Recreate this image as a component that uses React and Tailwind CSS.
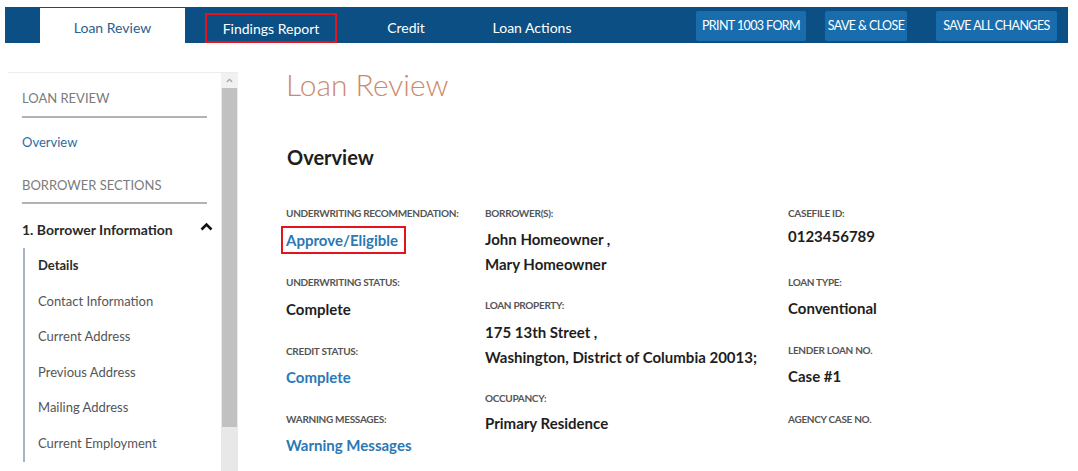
import React from "react";

const font = { fontFamily: "Lato, 'Open Sans', sans-serif" };

function Label({ children }) {
  return (
    <div className="text-[10px] leading-[14px] font-bold uppercase text-[#555555] tracking-[-0.3px]">
      {children}
    </div>
  );
}

function Value({ children, blue }) {
  return (
    <div
      className={
        "text-[15px] leading-[25px] font-bold " +
        (blue ? "text-[#2b78b4]" : "text-[#1e1e1e]")
      }
    >
      {children}
    </div>
  );
}

const subItems = [
  "Details",
  "Contact Information",
  "Current Address",
  "Previous Address",
  "Mailing Address",
  "Current Employment",
];

export default function App() {
  return (
    <div className="w-[1078px] h-[471px] bg-white overflow-hidden relative" style={font}>
      {/* Top nav */}
      <div className="mt-[7px] ml-[5px] w-[1063px] h-[36px] bg-[#0c4f84] flex items-stretch">
        <div className="w-[35px]" />
        <div className="w-[145px] mt-[1px] pt-[4px] bg-white flex items-center justify-center text-[14px] text-[#2d5e8c]">
          Loan Review
        </div>
        <div className="ml-[20px] w-[132px] mt-[6px] pt-[1px] border-2 border-[#e3141b] flex items-center justify-center text-[14px] text-white">
          Findings Report
        </div>
        <div className="w-[138px] pt-[5px] flex items-center justify-center text-[14px] text-white">
          Credit
        </div>
        <div className="w-[114px] pt-[5px] flex items-center justify-center text-[14px] text-white">
          Loan Actions
        </div>
        <div className="ml-auto flex items-center pt-[2px] pr-[11px]">
          <div className="w-[110px] h-[30px] bg-[#1a6dad] rounded-[2px] flex items-center justify-center text-white text-[12.5px] tracking-[-0.6px]">
            PRINT 1003 FORM
          </div>
          <div className="ml-[19px] w-[82px] h-[30px] bg-[#1a6dad] rounded-[2px] flex items-center justify-center text-white text-[12.5px] tracking-[-0.6px]">
            SAVE &amp; CLOSE
          </div>
          <div className="ml-[29px] w-[121px] h-[30px] bg-[#1a6dad] rounded-[2px] flex items-center justify-center text-white text-[12.5px] tracking-[-0.6px]">
            SAVE ALL CHANGES
          </div>
        </div>
      </div>

      <div className="flex">
        {/* Sidebar */}
        <div className="mt-[29px] ml-[8px] w-[230px] h-[400px] border-t border-[#ececec] flex">
          <div className="w-[213px] pl-[14px] pr-[14px]">
            <div className="mt-[16px] text-[13px] leading-[18px] text-[#7b7b7b]">LOAN REVIEW</div>
            <div className="mt-[9px] h-[2px] bg-[#b3b3b3]" />
            <div className="mt-[15px] text-[13px] leading-[18px] text-[#2f6aa0]">Overview</div>
            <div className="mt-[25px] text-[13px] leading-[18px] text-[#7b7b7b]">BORROWER SECTIONS</div>
            <div className="mt-[8px] h-[2px] bg-[#b3b3b3]" />
            <div className="mt-[16px] flex items-center justify-between">
              <span className="text-[14px] leading-[20px] font-bold text-[#2a2a2a]">1. Borrower Information</span>
              <svg width="13" height="9" viewBox="0 0 13 9" className="mr-[-6px] mt-[-8px]">
                <polyline points="1.5,7.5 6.5,2.5 11.5,7.5" fill="none" stroke="#111" strokeWidth="2.6" />
              </svg>
            </div>
            <div className="mt-[8px] ml-[1px] border-l-2 border-[#a6b4c4] pl-[13px]">
              {subItems.map((s, i) => (
                <div
                  key={s}
                  className={
                    "h-[35.6px] flex items-center text-[13px] " +
                    (i === 0 ? "font-bold text-[#2a2a2a]" : "text-[#555]")
                  }
                >
                  {s}
                </div>
              ))}
            </div>
          </div>
          {/* Scrollbar */}
          <div className="w-[17px] flex flex-col bg-[#e8e8e8]">
            <div className="h-[15px] bg-[#f1f1f1] flex items-center justify-center">
              <svg width="7" height="5" viewBox="0 0 7 5">
                <polyline points="0.8,4 3.5,1.3 6.2,4" fill="none" stroke="#a3a3a3" strokeWidth="1.2" />
              </svg>
            </div>
            <div className="mx-[1px] h-[339px] bg-[#c1c1c1]" />
          </div>
        </div>

        {/* Main */}
        <div className="ml-[48px] flex-1">
          <div className="mt-[23px] text-[30px] leading-[36px] font-light text-[#cc8a6c]">Loan Review</div>
          <div className="mt-[41px] text-[20px] leading-[28px] font-bold text-[#1e1e1e] pl-[1px]">Overview</div>
          <div className="mt-[35px] flex pl-[0px]">
            {/* Column 1 */}
            <div className="w-[199px]">
              <div className="h-[69px]">
                <Label>Underwriting Recommendation:</Label>
                <div className="mt-[6px] -ml-[5px] inline-block border-2 border-[#e3141b] pl-[3px] pr-[6px]">
                  <div className="text-[15px] leading-[24px] font-bold text-[#2b78b4]">Approve/Eligible</div>
                </div>
              </div>
              <div className="h-[69px]">
                <Label>Underwriting Status:</Label>
                <div className="mt-[8px]"><Value>Complete</Value></div>
              </div>
              <div className="h-[68px]">
                <Label>Credit Status:</Label>
                <div className="mt-[7px]"><Value blue>Complete</Value></div>
              </div>
              <div>
                <Label>Warning Messages:</Label>
                <div className="mt-[7px]"><Value blue>Warning Messages</Value></div>
              </div>
            </div>
            {/* Column 2 */}
            <div className="w-[303px]">
              <div className="h-[92px]">
                <Label>Borrower(s):</Label>
                <div className="mt-[7px]">
                  <Value>John Homeowner ,</Value>
                  <Value>Mary Homeowner</Value>
                </div>
              </div>
              <div className="h-[93px]">
                <Label>Loan Property:</Label>
                <div className="mt-[8px]">
                  <Value>175 13th Street ,</Value>
                  <Value>Washington, District of Columbia 20013;</Value>
                </div>
              </div>
              <div>
                <Label>Occupancy:</Label>
                <div className="mt-[6px]"><Value>Primary Residence</Value></div>
              </div>
            </div>
            {/* Column 3 */}
            <div className="flex-1">
              <div className="h-[69px]">
                <Label>Casefile ID:</Label>
                <div className="mt-[4px]"><Value>0123456789</Value></div>
              </div>
              <div className="h-[68px]">
                <Label>Loan Type:</Label>
                <div className="mt-[7px]"><Value>Conventional</Value></div>
              </div>
              <div className="h-[69px]">
                <Label>Lender Loan No.</Label>
                <div className="mt-[7px]"><Value>Case #1</Value></div>
              </div>
              <div>
                <Label>Agency Case No.</Label>
              </div>
            </div>
          </div>
        </div>
      </div>
    </div>
  );
}
